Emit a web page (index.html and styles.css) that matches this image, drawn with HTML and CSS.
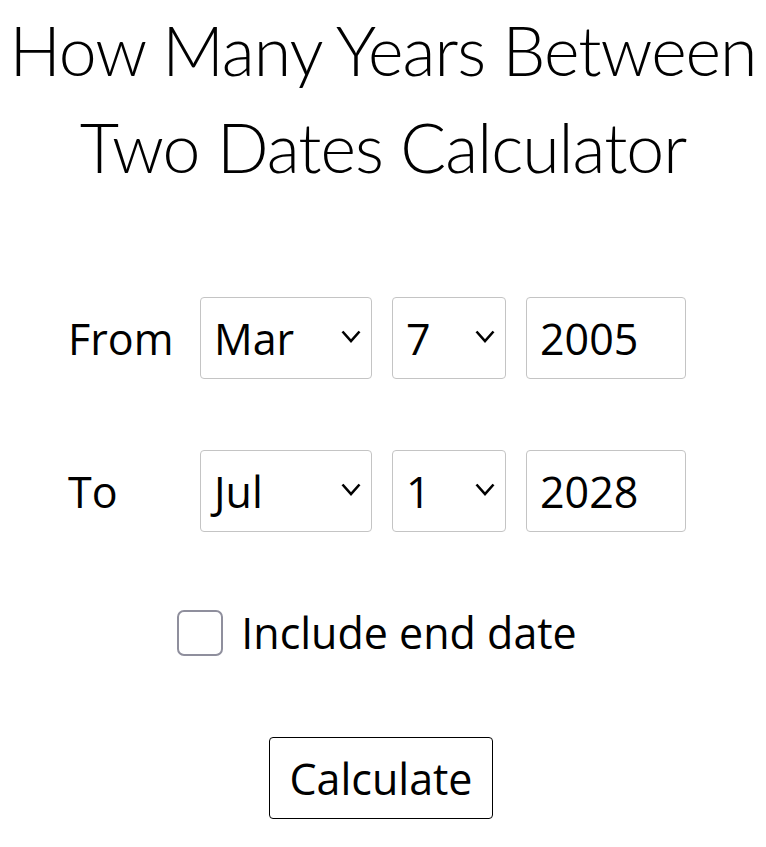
FILE: index.html
```html
<!DOCTYPE html>
<html lang="en">
<head>
<meta charset="utf-8">
<title>How Many Years Between Two Dates Calculator</title>
<link rel="stylesheet" href="styles.css">
</head>
<body>
<main class="page">
  <h1 class="title"><span class="line">How Many Years Between</span> <span class="line">Two Dates Calculator</span></h1>
  <form class="calc">
    <div class="row">
      <span class="label">From</span>
      <div class="field select month"><span>Mar</span><svg class="chev" viewBox="0 0 20 13"><path d="M1.5 1.5 L10 11 L18.5 1.5" fill="none" stroke="#000" stroke-width="2.6"/></svg></div>
      <div class="field select day"><span>7</span><svg class="chev" viewBox="0 0 20 13"><path d="M1.5 1.5 L10 11 L18.5 1.5" fill="none" stroke="#000" stroke-width="2.6"/></svg></div>
      <div class="field year"><span>2005</span></div>
    </div>
    <div class="row">
      <span class="label">To</span>
      <div class="field select month"><span>Jul</span><svg class="chev" viewBox="0 0 20 13"><path d="M1.5 1.5 L10 11 L18.5 1.5" fill="none" stroke="#000" stroke-width="2.6"/></svg></div>
      <div class="field select day"><span>1</span><svg class="chev" viewBox="0 0 20 13"><path d="M1.5 1.5 L10 11 L18.5 1.5" fill="none" stroke="#000" stroke-width="2.6"/></svg></div>
      <div class="field year"><span>2028</span></div>
    </div>
    <div class="check-row">
      <span class="box"></span>
      <span class="check-label">Include end date</span>
    </div>
    <div class="btn-row">
      <span class="btn">Calculate</span>
    </div>
  </form>
</main>
</body>
</html>
```
FILE: styles.css
```css
html, body {
  margin: 0;
  padding: 0;
  background: #fff;
  color: #000;
  font-family: "Open Sans", "Noto Sans", sans-serif;
}
.page {
  width: 766px;
}
.title {
  margin: 0;
  padding-top: 1px;
  font-family: Lato, "Open Sans", sans-serif;
  font-size: 68px;
  font-weight: 300;
  line-height: 97px;
  letter-spacing: -1px;
  text-align: center;
}
.line {
  display: block;
  white-space: nowrap;
}
.calc {
  padding-top: 102px;
}
.row {
  display: flex;
  align-items: center;
  padding-left: 68px;
  gap: 20px;
  margin-bottom: 71px;
}
.label {
  width: 112px;
  font-size: 43px;
}
.field {
  box-sizing: border-box;
  height: 82px;
  border: 1px solid #c4c4c4;
  border-radius: 4px;
  display: flex;
  align-items: center;
  font-size: 43px;
  padding-left: 13px;
}
.select {
  justify-content: space-between;
  padding-right: 10px;
}
.month { width: 172px; }
.day { width: 114px; }
.year { width: 160px; }
.chev {
  width: 20px;
  height: 13px;
  margin-top: -4px;
}
.check-row {
  display: flex;
  align-items: center;
  justify-content: center;
  gap: 18px;
  margin-top: 0;
  padding-right: 12px;
}
.box {
  box-sizing: border-box;
  width: 46px;
  height: 46px;
  border: 2px solid #8f8f9d;
  border-radius: 7px;
}
.check-label {
  font-size: 43px;
}
.btn-row {
  display: flex;
  justify-content: center;
  margin-top: 75px;
  padding-right: 4px;
}
.btn {
  box-sizing: border-box;
  width: 224px;
  height: 82px;
  border: 1px solid #000;
  border-radius: 4px;
  display: flex;
  align-items: center;
  justify-content: center;
  font-size: 43px;
}
```
